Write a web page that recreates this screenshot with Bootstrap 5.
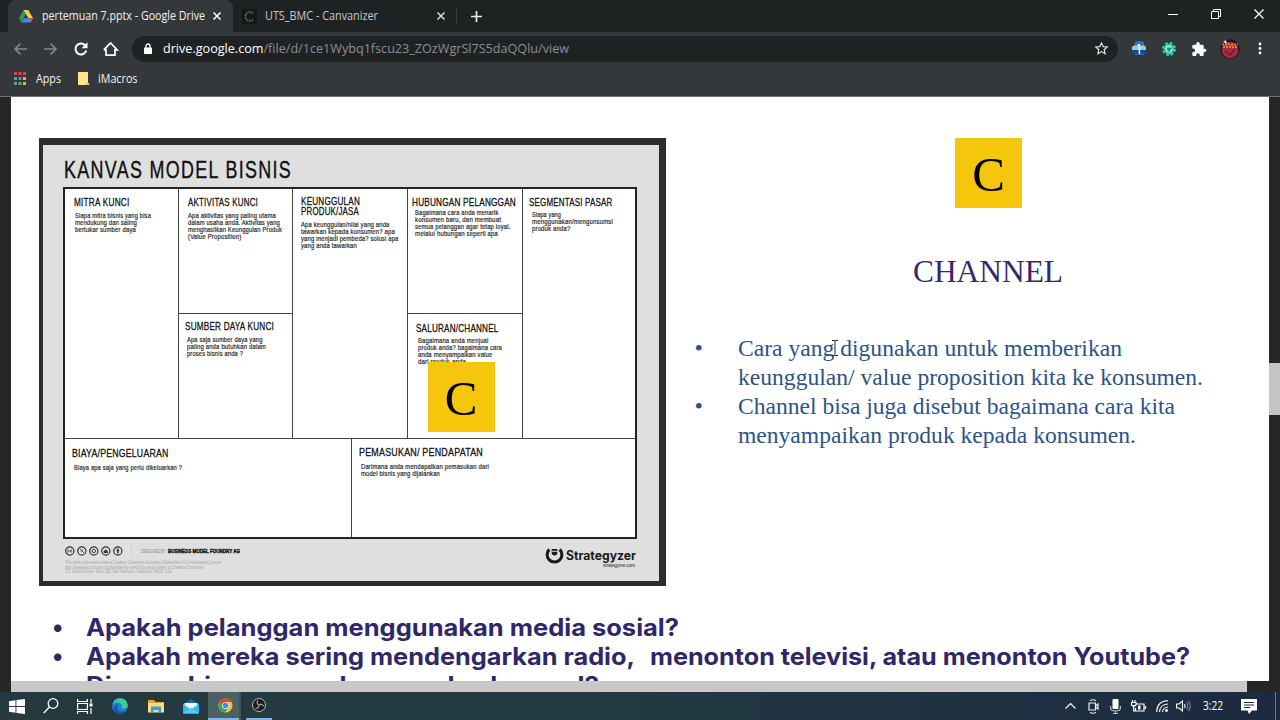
<!DOCTYPE html>
<html lang="id">
<head>
<meta charset="utf-8">
<title>pertemuan 7.pptx - Google Drive</title>
<link rel="stylesheet" href="https://cdn.jsdelivr.net/npm/bootstrap@5.3.0/dist/css/bootstrap.min.css">
<style>
body{width:1280px;height:720px;overflow:hidden;background:#262626;font-family:"Open Sans","Noto Sans",sans-serif;font-size:12px;line-height:1}
svg{display:block;flex:none;overflow:visible}
.fit{display:inline-block;white-space:pre;transform-origin:0 50%}
.slot{display:flex;align-items:center;justify-content:center;flex:none}
/* browser chrome */
.tabs-bar{height:32px;background:#1f2223;color:#c5c8ca}
.tab-on{width:225px;height:32px;margin-left:8px;background:#35383a;border-radius:8px 8px 0 0;color:#f0f2f3;position:relative}
.tools{height:33px;background:#35383a}
.omni{width:986px;height:26px;border-radius:13px;background:#1f2223;color:#8b8f91}
.omni b{font-weight:400;color:#fff}
.marks{height:32px;background:#35383a;color:#f0f2f3;border-bottom:1px solid #707274}
/* viewer */
.viewer{height:595px;background:#262626;padding-left:11px}
.slide{width:1258px;height:584px;background:#fff;overflow:hidden;position:relative}
.thumb-y{width:11px;height:52px;margin-top:266px;background:#c4c4c4}
.thumb-x{width:1236px;height:11px;background:#c8c8c8}
.board{width:627px;height:448px;margin:41px 0 0 28px;background:#dfdfdf;border:solid #2d2d2d;border-width:7px 7px 5px 4px;padding-left:20px;font-family:"Liberation Sans Narrow","Liberation Sans",sans-serif;color:#1b1b1b}
.board-title{height:42px;padding-left:1px;font-size:24.5px;line-height:49px;letter-spacing:1.8px;color:#111;-webkit-text-stroke:.4px #111}
.bmc{width:574px;height:352px;background:#fff;border:2px solid #222}
.bmc-top{display:grid;grid-template-columns:114px 114px 115px 115px minmax(0,1fr);grid-template-rows:125px 125px}
.cell{border:0 solid #444;min-width:0}
.tall{grid-row:span 2}
.er{border-right-width:1px}.eb{border-bottom-width:1px}
.bmc-low{height:98px}
.cell h6{font:400 11.8px/10px "Liberation Sans Narrow","Liberation Sans",sans-serif;margin:0;color:#111;-webkit-text-stroke:.3px #111;letter-spacing:.3px;display:block}
.cell h6 .fit,.cell p .fit{display:block;width:max-content}
.cell p{font-size:7px;line-height:7px;margin:0;color:#222;-webkit-text-stroke:.2px #333;letter-spacing:.2px}
.c1{padding:8px 0 0 9px}.c1 p{margin:5px 0 0 .5px}
.c2{padding:8px 0 0 9px}.c2 p{margin:5px 0 0 -.5px}
.c3{padding:7px 0 0 8px}.c3 p{margin:5px 0 0}
.c4{padding:8px 0 0 4px}.c4 p{margin:2px 0 0 3px}
.c5{padding:8px 0 0 6px}.c5 p{margin:4px 0 0 3px}
.c6{padding:7px 0 0 6px}.c6 p{margin:5px 0 0 2px}
.c7{padding:9px 0 0 8px;position:relative}.c7 p{margin:4px 0 0 2px}
.c8{width:287px;padding:9px 0 0 7px}.c8 p{margin:6px 0 0 2px}
.c9{padding:8px 0 0 7px}.c9 p{margin:6px 0 0 2px}
.sq{width:67px;height:70px;background:#f5c60b;color:#000;font:49px/73px "Liberation Serif",serif;text-align:center}
.sq-over{position:absolute;left:19.5px;top:48px}
.foot{height:42px;padding:7px 22px 0 2px}
.fine{font-size:4.6px;line-height:4.5px;color:#a5a5a5}
.designed{font-size:6px;color:#888}
.designed b{color:#111;-webkit-text-stroke:.4px #111}
.brand{font:700 12.5px/14px Inter,sans-serif;color:#1a1a1a}
.right-col{width:583px;margin-left:28px;padding-top:41px}
.channel{font:32px/36px "Liberation Serif",serif;color:#33286b;margin:45px 0 0 219px}
.points{font:24px/29px "Liberation Serif",serif;color:#2b5389;margin:45px 0 0 .5px;padding:0}
.points .ln,.asks .ln{display:flex;height:29px}
.points .dot{width:43.5px;flex:none}
.asks{font:700 24px/29px Inter,sans-serif;color:#2f2768;margin:27px 0 0 41px}
.asks .dot{width:33.500px;flex:none;line-height:27px}
.ibeam{position:absolute;left:820px;top:243px}
/* taskbar */
.task{height:28px;background:linear-gradient(90deg,#25393e,#223a42 45%,#1c2a40)}
.on-app{background:#4b6067;border-bottom:2px solid #76b9ed;height:28px;width:31px}
.run-app{border-bottom:2px solid #76b9ed;height:28px;width:26px}
</style>
</head>
<body>
<header>
  <div class="tabs-bar d-flex align-items-center">
    <div class="tab-on d-flex align-items-center">
      <svg width="14" height="13" viewBox="0 0 14 13" style="margin-left:11px"><path d="M4.7 0h4.5L4.6 8 2.3 12 0 8.2z" fill="#1fa463"/><path d="M4.7 0h4.5L14 8.2H9.5z" fill="#ffcf48"/><path d="M4.6 8.2H14L11.7 12.500H2.300z" fill="#4688f4"/><path d="M10 8.200H14L12 12z" fill="#e5483a"/></svg>
      <div style="width:171px;margin-left:9px"><span class="fit" data-w="163">pertemuan 7.pptx - Google Drive</span></div>
      <svg width="8" height="8" viewBox="0 0 8 8" stroke="#fff" stroke-width="1.6"><path d="M.5.5l7 7M7.500.5l-7 7"/></svg>
    </div>
    <svg width="15" height="15" viewBox="0 0 15 15" style="margin:0 8px 0 9px" fill="none"><path d="M0 0h15v15H0z" fill="#151617"/><path d="M11 4.500A4.400 4.400 0 1 0 11 10.500" stroke="#55585a" stroke-width="2" stroke-dasharray="2 .7"/></svg>
    <div style="width:172px"><span class="fit" data-w="113">UTS_BMC - Canvanizer</span></div>
    <svg width="8" height="8" viewBox="0 0 8 8" stroke="#d8dadb" stroke-width="1.500"><path d="M.5.5l7 7M7.500.5l-7 7"/></svg>
    <div class="vr" style="height:18px;align-self:center;margin-left:11px;color:#8a8d8f"></div>
    <svg width="11" height="11" style="margin-left:14px" viewBox="0 0 11 11" stroke="#e8eaeb" stroke-width="1.700"><path d="M5.500 0v11M0 5.500h11"/></svg>
    <div class="d-flex ms-auto align-self-start" style="height:27px">
      <div class="slot" style="width:43px"><svg width="10" height="10" stroke="#fff"><path d="M0 5.500h10"/></svg></div>
      <div class="slot" style="width:43px"><svg width="10" height="10" fill="none" stroke="#fff"><path d="M.5 2.500h7v7h-7zM2.500 2.500v-2h7v7h-2"/></svg></div>
      <div class="slot" style="width:43px"><svg width="10" height="10" stroke="#fff" stroke-width="1.200"><path d="M.5.5l9 9M9.500.5l-9 9"/></svg></div>
    </div>
  </div>
  <div class="tools d-flex align-items-center">
    <div class="slot" style="width:30px;margin-left:5px"><svg width="13" height="12" fill="none" stroke="#85888a" stroke-width="1.600"><path d="M13 6H1M6.500.7L1 6l5.500 5.300"/></svg></div>
    <div class="slot" style="width:31px"><svg width="13" height="12" fill="none" stroke="#85888a" stroke-width="1.600"><path d="M0 6h12M6.500.7L12 6l-5.500 5.300"/></svg></div>
    <div class="slot" style="width:30px"><svg width="14" height="14" fill="none" stroke="#fff" stroke-width="2"><path d="M11.300 3.500A5.500 5.500 0 1 0 12.300 8.500"/><path d="M13.500.3v6H7.500z" fill="#fff" stroke="none"/></svg></div>
    <div class="slot" style="width:29px"><svg width="15" height="14" fill="none" stroke="#fff" stroke-width="1.700"><path d="M3 7v6.200h9V7M.8 7.800L7.500 1l6.700 6.800H11"/><path d="M1 7.800h3"/></svg></div>
    <div class="omni d-flex align-items-center" style="margin-left:7px">
      <svg width="8" height="11" style="margin-left:12px;margin-right:11px"><rect y="4.500" width="8" height="6.500" rx=".8" fill="#fff"/><path d="M2 5V3a2 2 0 0 1 4 0v2" fill="none" stroke="#fff" stroke-width="1.300"/></svg>
      <span class="fit" data-w="406" style="font-size:12.500px;padding-top:1.500px"><b>drive.google.com</b>/file/d/1ce1Wybq1fscu23_ZOzWgrSl7S5daQQlu/view</span>
      <svg class="ms-auto" width="13" height="13" viewBox="0 0 13 13" fill="none" stroke="#dfe1e2" stroke-width="1.200" style="margin-right:10px"><path d="M6.500.9l1.700 3.700 4 .4-3 2.700.9 4-3.600-2.100-3.600 2.100.9-4-3-2.700 4-.4z"/></svg>
    </div>
    <div class="slot" style="width:30px;margin-left:6px"><svg width="15" height="13"><path d="M3 0q4.500-2 9 0v13H3z" fill="#2377c2"/><path d="M0 5q3-3 4-1 3-3 5 0 3-2 5 1v3H0z" fill="#9bc8e6"/><path d="M0 8h14.500v4H0z" fill="#174e80"/><path d="M7.400 2v10M5.500 3h2" stroke="#fff" stroke-width="1.500"/></svg></div>
    <div class="slot" style="width:30px"><svg width="14" height="14" viewBox="-7 -7 14 14"><circle r="5.800" fill="none" stroke="#2cd1b3" stroke-width="2.400" stroke-dasharray="2.600 1.955"/><circle r="5.200" fill="#2cd1b3"/><circle r="3" fill="none" stroke="#cffff4"/><path d="M-2-1L0 0l3-1M0 0v3" stroke="#146b5c" fill="none"/></svg></div>
    <div class="slot" style="width:30px"><svg width="14" height="14" viewBox="2 1 20 21" fill="#fff"><path d="M20.500 11H19V7a2 2 0 0 0-2-2h-4V3.500a2.500 2.500 0 0 0-5 0V5H4a2 2 0 0 0-2 2v3.800h1.500a2.700 2.700 0 0 1 0 5.400H2V20a2 2 0 0 0 2 2h3.800v-1.500a2.700 2.700 0 0 1 5.400 0V22H17a2 2 0 0 0 2-2v-4h1.500a2.500 2.500 0 0 0 0-5z"/></svg></div>
    <div class="slot" style="width:32px"><svg width="20" height="20"><circle cx="10" cy="10" r="9.700" fill="#1e1518"/><circle cx="10" cy="11" r="8.300" fill="#a32b42"/><path d="M2 5.500h16M3 8h14" stroke="#d2872e" stroke-width="2" stroke-dasharray="2 1"/><path d="M3 3l3-2 1 4z" fill="#ddd"/><path d="M5 12l5 4 4-5" stroke="#6c1b2c" stroke-width="1.500" fill="none"/></svg></div>
    <div class="slot" style="width:28px"><svg width="4" height="13" fill="#fff"><circle cx="2" cy="2" r="1.400"/><circle cx="2" cy="6.500" r="1.400"/><circle cx="2" cy="11" r="1.400"/></svg></div>
  </div>
  <div class="marks d-flex" style="padding-top:7px">
    <svg width="12" height="14" style="margin-left:14px" viewBox="0 0 12 14"><g fill="#d64550"><path d="M0 0h3v3H0zM4.500 0h3v3h-3zM9 0h3v3H9z"/></g><path d="M0 5h3v3H0zM0 10h3v3H0z" fill="#4fae76"/><path d="M4.500 5h3v3h-3z" fill="#3f8de0"/><path d="M4.500 10h3v3h-3z" fill="#58a672"/><path d="M9 5h3v3H9zM9 10h3v3H9z" fill="#e0b13b"/></svg>
    <div style="width:42px;margin-left:9.500px;padding-top:1px"><span class="fit" data-w="25">Apps</span></div>
    <svg width="12" height="13"><path d="M0 .5Q0 0 1 0h9v10l1.500 3H0z" fill="#ffe48a"/><path d="M9 10l2.500 3H8z" fill="#e5c564"/></svg>
    <div style="margin-left:8.500px;padding-top:1px"><span class="fit" data-w="39.5">iMacros</span></div>
  </div>
</header>

<main class="viewer">
  <div class="d-flex">
    <section class="slide flex-shrink-0">
      <div class="d-flex">
        <div class="board flex-shrink-0">
          <div class="board-title"><span class="fit" data-w="228">KANVAS MODEL BISNIS</span></div>
          <div class="bmc">
            <div class="bmc-top">
              <div class="cell tall er eb c1"><h6><span class="fit" data-w="55.5">MITRA KUNCI</span></h6>
                <p><span class="fit" data-w="76">Siapa mitra bisnis yang bisa</span><span class="fit" data-w="62">mendukung dan saling</span><span class="fit" data-w="61">bertukar sumber daya</span></p></div>
              <div class="cell er eb c2"><h6><span class="fit" data-w="70">AKTIVITAS KUNCI</span></h6>
                <p><span class="fit" data-w="88">Apa aktivitas yang paling utama</span><span class="fit" data-w="92">dalam usaha anda. Aktivitas yang</span><span class="fit" data-w="94">menghasilkan Keunggulan Produk</span><span class="fit" data-w="53.5">(Value Proposition)</span></p></div>
              <div class="cell tall er eb c3"><h6><span class="fit" data-w="59">KEUNGGULAN</span><span class="fit" data-w="58">PRODUK/JASA</span></h6>
                <p><span class="fit" data-w="88.5">Apa keunggulan/nilai yang anda</span><span class="fit" data-w="94">tawarkan kepada konsumen? apa</span><span class="fit" data-w="97.5">yang menjadi pembeda? solusi apa</span><span class="fit" data-w="56">yang anda tawarkan</span></p></div>
              <div class="cell er eb c4"><h6><span class="fit" data-w="104">HUBUNGAN PELANGGAN</span></h6>
                <p><span class="fit" data-w="83.5">Bagaimana cara anda menarik</span><span class="fit" data-w="86">konsumen baru, dan membuat</span><span class="fit" data-w="95.5">semua pelanggan agar tetap loyal.</span><span class="fit" data-w="83">melalui hubungan seperti apa</span></p></div>
              <div class="cell tall eb c5"><h6><span class="fit" data-w="83.5">SEGMENTASI PASAR</span></h6>
                <p><span class="fit" data-w="29">Siapa yang</span><span class="fit" data-w="81">menggunakan/mengonsumsi</span><span class="fit" data-w="38.5">produk anda?</span></p></div>
              <div class="cell er eb c6"><h6><span class="fit" data-w="89">SUMBER DAYA KUNCI</span></h6>
                <p><span class="fit" data-w="75.5">Apa saja sumber daya yang</span><span class="fit" data-w="79">paling anda butuhkan dalam</span><span class="fit" data-w="56">proses bisnis anda ?</span></p></div>
              <div class="cell er eb c7"><h6><span class="fit" data-w="82.5">SALURAN/CHANNEL</span></h6>
                <p><span class="fit" data-w="70.5">Bagaimana anda menjual</span><span class="fit" data-w="84">produk anda? bagaimana cara</span><span class="fit" data-w="74.5">anda menyampaikan value</span><span class="fit" data-w="48">dari produk anda</span></p>
                <div class="sq sq-over">C</div></div>
            </div>
            <div class="bmc-low d-flex">
              <div class="cell er c8"><h6><span class="fit" data-w="96.5">BIAYA/PENGELUARAN</span></h6><p><span class="fit" data-w="108">Biaya apa saja yang perlu dikeluarkan ?</span></p></div>
              <div class="cell c9"><h6><span class="fit" data-w="124">PEMASUKAN/ PENDAPATAN</span></h6><p><span class="fit" data-w="128">Darimana anda mendapatkan pemasukan dari</span><span class="fit" data-w="79">model bisnis yang dijalankan</span></p></div>
            </div>
          </div>
          <div class="foot d-flex justify-content-between">
            <div>
              <div class="d-flex align-items-center" style="height:10px">
                <svg width="58" height="10" fill="none" stroke="#333" stroke-width="1.200"><circle cx="4.800" cy="5" r="4.100"/><circle cx="16.800" cy="5" r="4.100"/><circle cx="28.800" cy="5" r="4.100"/><circle cx="40.800" cy="5" r="4.100"/><circle cx="52.800" cy="5" r="4.100"/><path d="M4.300 4.200a1 1 0 1 0 0 1.600M7 4.200a1 1 0 1 0 0 1.600M15 3l4 4M16 5.500l2-2" stroke-width=".9"/><circle cx="28.800" cy="5" r="1.700" stroke-width=".9"/><path d="M38.600 5.500l2.200-2.300L43 5.500V7h-4.400z" fill="#333" stroke="none"/><path d="M52.800 2.500v5M51.500 4.500h2.600" stroke-width="1.400"/></svg>
                <div class="vr" style="margin:0 9px 0 8px;height:9px;align-self:center;opacity:.08"></div>
                <div class="designed d-flex"><div style="width:27px"><span class="fit" data-w="25">DESIGNED BY</span></div><b><span class="fit" data-w="72">BUSINESS MODEL FOUNDRY AG</span></b></div>
              </div>
              <div class="fine" style="margin-top:5px;width:160px">
                <div><span class="fit" data-w="157">This work is licensed under a Creative Commons Attribution-ShareAlike 4.0 International License.</span></div>
                <div><span class="fit" data-w="139">http://creativecommons.org/licenses/by-sa/4.0/ or send a letter to Creative Commons,</span></div>
                <div><span class="fit" data-w="108">171 Second Street, Suite 300, San Francisco, California, 94105, USA.</span></div>
              </div>
            </div>
            <div class="d-flex" style="width:92px">
              <svg width="19" height="18" viewBox="0 0 19 18" style="margin-top:1px"><path d="M4.300 2.400A7.400 7.400 0 1 0 14.700 2.400" fill="none" stroke="#1a1a1a" stroke-width="3"/><path d="M6.700 2h5.600v5q-2.800 3-5.600 0z" fill="#1a1a1a"/><path d="M7 4.300h5" stroke="#dfdfdf"/></svg>
              <div class="brand" style="margin:3px 0 0 2px"><span class="fit d-block" style="width:max-content" data-w="70">Strategyzer</span><div style="font:5.500px/4px 'Liberation Sans',sans-serif;padding:0 0 0 37px"><span class="fit" data-w="32">strategyzer.com</span></div></div>
            </div>
          </div>
        </div>
        <div class="right-col">
          <div class="sq" style="margin-left:261px;margin-top:0">C</div>
          <div class="channel"><span class="fit" data-w="150">CHANNEL</span></div>
          <div class="points">
            <div class="ln"><span class="dot">•</span><span class="fit" data-w="384">Cara yang digunakan untuk memberikan</span></div>
            <div class="ln"><span class="dot"></span><span class="fit" data-w="465">keunggulan/ value proposition kita ke konsumen.</span></div>
            <div class="ln"><span class="dot">•</span><span class="fit" data-w="437">Channel bisa juga disebut bagaimana cara kita</span></div>
            <div class="ln"><span class="dot"></span><span class="fit" data-w="398">menyampaikan produk kepada konsumen.</span></div>
          </div>
        </div>
      </div>
      <div class="asks">
        <div class="ln"><span class="dot">•</span><span class="fit" data-w="593">Apakah pelanggan menggunakan media sosial?</span></div>
        <div class="ln"><span class="dot">•</span><div style="width:564px"><span class="fit" data-w="549">Apakah mereka sering mendengarkan radio,</span></div><span class="fit" data-w="540">menonton televisi, atau menonton Youtube?</span></div>
        <div class="ln"><span class="dot"></span><span class="fit" data-w="513">Dimana biasanya pelanggan berkumpul?</span></div>
      </div>
      <svg class="ibeam" width="8" height="16" fill="none" stroke="#222"><path d="M1 .5h2.500l.5.5.5-.5H7M4 1v14M1 15.500h2.500l.5-.5.5.5H7"/></svg>
    </section>
    <div class="thumb-y"></div>
  </div>
  <div class="thumb-x"></div>
</main>

<footer class="task d-flex align-items-center">
  <div class="slot" style="width:34px"><svg width="16" height="15" fill="#fff"><path d="M0 2.200L6.500 1.200V7H0zM7.400 1.100L16 0v7H7.400zM0 8h6.500v5.800L0 12.800zM7.400 8H16v7l-8.600-1.100z"/></svg></div>
  <div class="slot" style="width:34px"><svg width="16" height="16" fill="none" stroke="#fff" stroke-width="1.300"><circle cx="10" cy="5.500" r="4.800"/><path d="M6.500 9L.8 15"/></svg></div>
  <div class="slot" style="width:34px"><svg width="16" height="15" fill="none" stroke="#fff" stroke-width="1.200"><path d="M.6 0v2.500h9.800V0M.6 15v-2.500h9.800V15M.6 4.500h9.800v6H.6zM14 0v4M14 9v6"/><path d="M12.500 4.500h3v3h-3z" fill="#fff" stroke="none"/></svg></div>
  <div class="slot" style="width:36px"><svg width="16" height="16" viewBox="0 0 16 16"><circle cx="8" cy="8" r="7.800" fill="#1c82d6"/><path d="M.5 6Q2 .3 8 .2q7 .3 7.800 7 0 3.300-4 3.300-3 0-2-2.300Q9.500 4.500 5.500 4.500 2 4.500.5 6z" fill="#42c99a"/><path d="M.5 6Q2.500 1 8 .2 3.800 3 .5 6z" fill="#2cb6df"/><path d="M6 7q-2 3 .5 5.500 3 2.500 7 0-3 4-7.500 2.800Q1 13 2 9q1-3 4-2z" fill="#1357a6"/></svg></div>
  <div class="slot" style="width:35px"><svg width="16" height="14"><path d="M0 1h6l1.500 2H16v10H0z" fill="#e8a92d"/><path d="M0 4h16v9.500H0z" fill="#ffdc75"/><path d="M3 7.500h10v6.500h-2.500v-3h-5v3H3z" fill="#3d9bdc"/></svg></div>
  <div class="slot" style="width:35px"><svg width="16" height="15"><path d="M0 5l8-5 8 5v9H0z" fill="#1769aa"/><path d="M1.500 4h13v6h-13z" fill="#e9f7ff"/><path d="M0 5l8 5.500L16 5v9.500H0z" fill="#35b6ee"/><path d="M0 14.500l8-6 8 6z" fill="#54cbf7"/></svg></div>
  <div class="slot on-app" style="padding-left:3px"><svg width="15" height="15" viewBox="-8 -8 16 16"><circle r="7.500" fill="#f5c433"/><path d="M-6.500-3.700A7.500 7.500 0 0 1 6.500-3.700H0L-3.300 1.900z" fill="#df4334"/><path d="M-6.500-3.700A7.500 7.500 0 0 0-.5 7.500L3 2-3 2z" fill="#3aa757"/><circle r="3.600" fill="#fff"/><circle r="2.900" fill="#4285f4"/></svg></div>
  <div style="width:2px;height:28px;background:#3d5259;margin-right:5px"></div>
  <div class="slot run-app"><svg width="14" height="14" viewBox="-7 -7 14 14"><circle r="6.500" fill="#1b191c" stroke="#c7c7c7" stroke-width=".9"/><g fill="none" stroke="#9b9b9b" stroke-width="1.300"><path id="b" d="M0 0Q-3-1.500-1.200-4.500"/><use href="#b" transform="rotate(120)"/><use href="#b" transform="rotate(240)"/></g></svg></div>
  <div class="d-flex align-items-center ms-auto">
    <div class="slot" style="width:23px"><svg width="11" height="6" fill="none" stroke="#fff" stroke-width="1.200"><path d="M.5 5.500l5-5 5 5"/></svg></div>
    <div class="slot" style="width:22px"><svg width="11" height="15" fill="none" stroke="#eee" stroke-width="1.200"><path d="M2 1.500q3-1.500 6 0M2 13.500q3 1.500 6 0M1 4h6.500v7H1zM7.500 7l2.500-2v5L7.500 8"/></svg></div>
    <div class="slot" style="width:22px"><svg width="11" height="15"><rect x="2.500" width="6" height="10" rx="1" fill="#fff"/><path d="M.6 7v2.500Q1 12 5.500 12t4.900-2.500V7M5.500 12v2.500M3 14.500h5" fill="none" stroke="#b9c0c8" stroke-width="1.200"/></svg></div>
    <div class="slot" style="width:24px"><svg width="15" height="12" fill="none" stroke="#fff" stroke-width="1.200"><path d="M5.500 4H13v7H4.500V8M14.500 6v3M1.500 0v2M4 0v2M.5 2.500h4.500V5Q2.800 7 .5 5zM2.700 6.500V11h2"/><path d="M7 5.500h2.500v4H7z" fill="#fff" stroke="none"/></svg></div>
    <div class="slot" style="width:23px"><svg width="12" height="12" fill="none" stroke="#e2e5e8" stroke-width="1.200"><path d="M.6 12Q1 1 12 .6M3.500 12Q4 4.500 12 4M6.500 12Q7 7.500 12 7"/><circle cx="10.500" cy="10.500" r="1.400" fill="#fff" stroke="none"/></svg></div>
    <div class="slot" style="width:21px"><svg width="15" height="12" fill="none" stroke="#fff" stroke-width="1.100"><path d="M.6 4h2.500L6.500 1v10L3.100 8H.6z"/><path d="M8.500 4q1.300 2 0 4"/><path d="M10.500 2.500q2.500 3.500 0 7M12.500 1q3.500 5 0 10" stroke="#7e8b9b"/></svg></div>
    <div style="width:43px;padding-left:8.500px;color:#fff"><span class="fit" data-w="20">3:22</span></div>
    <div class="slot" style="width:20px;margin-left:2px"><svg width="16" height="15"><path d="M0 0h16v11.500h-5L8 15l-1.500-3.500H0z" fill="#fff"/><path d="M3 3.500h10M3 6h10M3 8.500h6" stroke="#1c2a40"/></svg></div>
    <div style="width:1px;height:28px;background:#6b7686;margin:0 4px 0 16px"></div>
  </div>
</footer>
<script src="https://cdn.jsdelivr.net/npm/bootstrap@5.3.0/dist/js/bootstrap.bundle.min.js"></script>
<script>
// Stretch or condense each line to its set width
document.querySelectorAll('.fit').forEach(function(el){
  el.style.transform='scaleX('+(el.dataset.w/el.getBoundingClientRect().width)+')';
});
</script>
</body>
</html>
